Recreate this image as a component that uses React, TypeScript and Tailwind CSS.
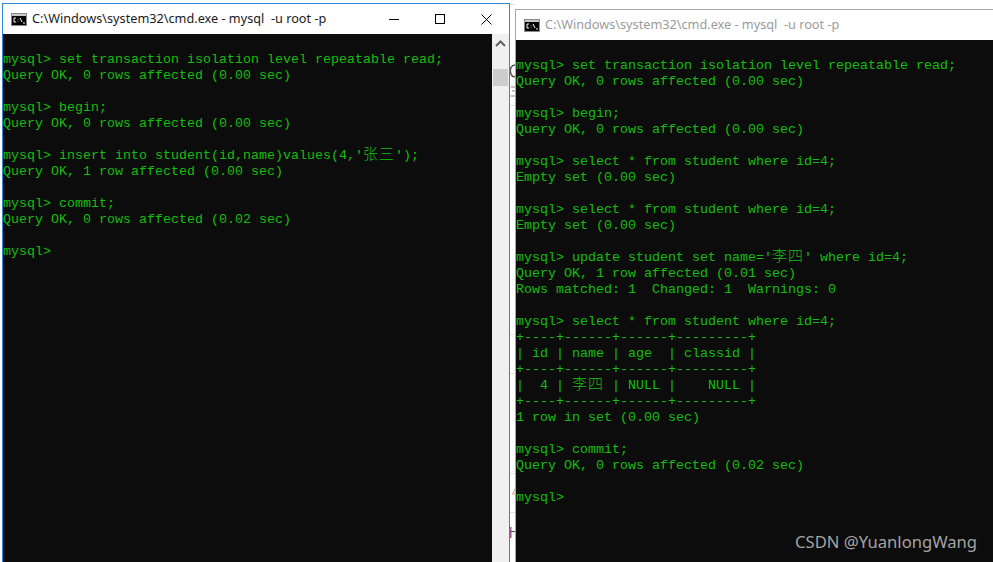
import type { ReactNode } from "react";

const leftLines: ReactNode[] = [
  "",
  "mysql> set transaction isolation level repeatable read;",
  "Query OK, 0 rows affected (0.00 sec)",
  "",
  "mysql> begin;",
  "Query OK, 0 rows affected (0.00 sec)",
  "",
  <>
    mysql&gt; insert into student(id,name)values(4,'<Cjk>张三</Cjk>');
  </>,
  "Query OK, 1 row affected (0.00 sec)",
  "",
  "mysql> commit;",
  "Query OK, 0 rows affected (0.02 sec)",
  "",
  "mysql>",
];

const rightLines: ReactNode[] = [
  "",
  "mysql> set transaction isolation level repeatable read;",
  "Query OK, 0 rows affected (0.00 sec)",
  "",
  "mysql> begin;",
  "Query OK, 0 rows affected (0.00 sec)",
  "",
  "mysql> select * from student where id=4;",
  "Empty set (0.00 sec)",
  "",
  "mysql> select * from student where id=4;",
  "Empty set (0.00 sec)",
  "",
  <>
    mysql&gt; update student set name='<Cjk>李四</Cjk>' where id=4;
  </>,
  "Query OK, 1 row affected (0.01 sec)",
  "Rows matched: 1  Changed: 1  Warnings: 0",
  "",
  "mysql> select * from student where id=4;",
  "+----+------+------+---------+",
  "| id | name | age  | classid |",
  "+----+------+------+---------+",
  <>
    |  4 | <Cjk>李四</Cjk> | NULL |    NULL |
  </>,
  "+----+------+------+---------+",
  "1 row in set (0.00 sec)",
  "",
  "mysql> commit;",
  "Query OK, 0 rows affected (0.02 sec)",
  "",
  "mysql>",
];

function Cjk({ children }: { children: ReactNode }) {
  return (
    <span className="text-[15px] font-light leading-[0] tracking-[1px] [font-family:'Noto_Sans_CJK_SC',sans-serif]">
      {children}
    </span>
  );
}

function CmdIcon() {
  return (
    <svg width="16" height="13" viewBox="0 0 16 13" className="shrink-0">
      <rect x="0.5" y="0.5" width="15" height="12" fill="#000" stroke="#8a8a8a" />
      <rect x="1" y="1" width="14" height="2" fill="#c8c8c8" />
      <path
        d="M5 5H3V9H5M7 6V6.5M7 8.5V9M9 5L11 9M12 10H14"
        fill="none"
        stroke="#fff"
        strokeWidth="1"
      />
    </svg>
  );
}

function TitleBar({ muted, controls }: { muted?: boolean; controls?: boolean }) {
  return (
    <div className="flex h-[30px] shrink-0 items-center bg-white pl-[8px]">
      <CmdIcon />
      <span
        className={`ml-[5px] whitespace-pre text-[12.7px] [font-family:'Noto_Sans',sans-serif] ${
          muted ? "text-[#9b9b9b]" : "text-[#1a1a1a]"
        }`}
      >
        {"C:\\Windows\\system32\\cmd.exe - mysql  -u root -p"}
      </span>
      {controls ? (
        <div className="ml-auto flex h-full">
          <div className="flex w-[46px] items-center justify-center">
            <svg width="10" height="10" viewBox="0 0 10 10">
              <path d="M0 5.5H10" stroke="#000" />
            </svg>
          </div>
          <div className="flex w-[46px] items-center justify-center">
            <svg width="10" height="10" viewBox="0 0 10 10">
              <rect x="0.5" y="0.5" width="9" height="9" fill="none" stroke="#000" />
            </svg>
          </div>
          <div className="flex w-[46px] items-center justify-center">
            <svg width="11" height="11" viewBox="0 0 11 11">
              <path d="M0.5 0.5L10.5 10.5M10.5 0.5L0.5 10.5" stroke="#000" />
            </svg>
          </div>
        </div>
      ) : null}
    </div>
  );
}

function Terminal({ lines, className }: { lines: ReactNode[]; className: string }) {
  return (
    <div
      className={`overflow-hidden bg-[#0c0c0c] pt-[2px] text-[13.33px] text-[#14bd0e] [font-family:'Liberation_Mono',monospace] ${className}`}
    >
      {lines.map((line, i) => (
        <div key={i} className="h-4 whitespace-pre leading-4">
          {line}
        </div>
      ))}
    </div>
  );
}

// what shows of the browser window behind, between the two consoles
function BehindStrip() {
  return (
    <svg width="5" height="562" viewBox="0 0 5 562" className="shrink-0">
      <path
        d="M0 4.5H5M0 105.5H5M0 334.5H5M0 373.5H5M0 473.5H5M0 512.5H5"
        stroke="#e4e4e4"
      />
      <path d="M5 65C1 65 0 69 0.5 72C1 76 3 77 5 76.5" fill="none" stroke="#555" strokeWidth="1.5" />
      <path d="M1 87H5M2 91H5M0.5 96H5" stroke="#8a8478" />
      <path d="M5 489L2.5 494H5" fill="none" stroke="#c9a27a" />
      <rect x="0" y="527" width="1.5" height="11" fill="#a0569a" />
      <path d="M1 531.5H5" stroke="#444" />
    </svg>
  );
}

export default function App() {
  return (
    <div className="relative flex h-[562px] w-[993px] overflow-hidden bg-white">
      <div className="ml-[2px] mt-[3px] flex w-[508px] shrink-0 flex-col border-x border-t border-[#2f86d2]">
        <TitleBar controls />
        <div className="flex min-h-0 flex-1">
          <Terminal lines={leftLines} className="w-[489px]" />
          <div className="flex flex-1 flex-col items-center bg-[#f0f0f0]">
            <svg width="11" height="7" viewBox="0 0 11 7" className="mt-[6px]">
              <path d="M1 6L5.5 1.5L10 6" fill="none" stroke="#606060" strokeWidth="2" />
            </svg>
            <div className="mt-[22px] h-[17px] w-[15px] bg-[#cdcdcd]" />
          </div>
        </div>
      </div>
      <BehindStrip />
      <div className="mt-[9px] flex min-w-0 flex-1 flex-col border-l border-t border-[#a6a6a6]">
        <TitleBar muted />
        <Terminal lines={rightLines} className="flex-1" />
      </div>
      <div className="absolute bottom-[10px] right-[16px] text-[16.6px] leading-5 text-[#a3a3a3] [font-family:'Noto_Sans',sans-serif]">
        CSDN @YuanlongWang
      </div>
    </div>
  );
}
